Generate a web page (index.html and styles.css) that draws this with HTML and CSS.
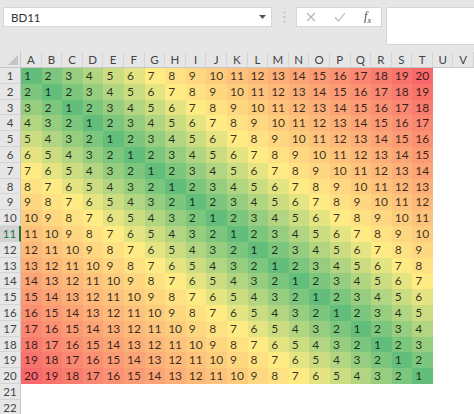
FILE: index.html
```html
<!DOCTYPE html>
<html lang="en">
<head>
    <meta charset="UTF-8">
    <meta name="viewport" content="width=device-width, initial-scale=1.0">
    <title>Distance grid</title>
    <link rel="stylesheet" href="styles.css">
</head>
<body>
    <div class="formula-bar">
        <div class="name-box">
            <span>BD11</span>
            <svg class="caret" width="7" height="4" viewBox="0 0 7 4"><path d="M0 0h7L3.5 4z" fill="#555"/></svg>
        </div>
        <div class="grip">
            <svg width="3" height="12" viewBox="0 0 3 12">
                <circle cx="1.5" cy="1.5" r="1" fill="#bdbdbd"/>
                <circle cx="1.5" cy="6" r="1" fill="#bdbdbd"/>
                <circle cx="1.5" cy="10.5" r="1" fill="#bdbdbd"/>
            </svg>
        </div>
        <div class="fx-box">
            <svg width="10" height="10" viewBox="0 0 10 10"><path d="M1 1l8 8M9 1l-8 8" stroke="#b3b3b3" stroke-width="1.1"/></svg>
            <svg width="12" height="10" viewBox="0 0 12 10"><path d="M1 5.5l3.5 3.5L11 1" stroke="#b3b3b3" stroke-width="1.1" fill="none"/></svg>
            <span class="fx">f<sub>x</sub></span>
        </div>
        <div class="formula-input"></div>
    </div>

    <div class="sheet" id="sheet"></div>

    <script>
        // Bảng màu kiểu Excel: xanh - vàng - đỏ
        const green = [99, 190, 123];
        const yellow = [255, 235, 132];
        const red = [248, 105, 107];
        const mid = 7;

        function mix(a, b, t) {
            return a.map((v, i) => Math.round(v + (b[i] - v) * t));
        }

        function colorFor(v) {
            let c;
            if (v <= mid) c = mix(green, yellow, (v - 1) / (mid - 1));
            else c = mix(yellow, red, (v - mid) / (20 - mid));
            return "rgb(" + c.join(",") + ")";
        }

        const sheet = document.getElementById("sheet");
        const letters = "ABCDEFGHIJKLMNOPQRSTUV";

        // Hàng tiêu đề cột
        const corner = document.createElement("div");
        corner.className = "corner";
        sheet.appendChild(corner);
        for (const l of letters) {
            const h = document.createElement("div");
            h.className = "col-head";
            h.innerText = l;
            sheet.appendChild(h);
        }

        // Các hàng dữ liệu
        for (let r = 1; r <= 22; r++) {
            const rh = document.createElement("div");
            rh.className = r === 11 ? "row-head active" : "row-head";
            rh.innerText = r;
            sheet.appendChild(rh);
            for (let c = 1; c <= 22; c++) {
                const cell = document.createElement("div");
                cell.className = "cell";
                if (r <= 20 && c <= 20) {
                    const v = Math.abs(r - c) + 1;
                    cell.innerText = v;
                    cell.style.background = colorFor(v);
                }
                sheet.appendChild(cell);
            }
        }
    </script>
</body>
</html>
```

FILE: styles.css
```css
body {
    margin: 0;
    width: 474px;
    height: 414px;
    overflow: hidden;
    background: #fff;
    font-family: Lato, "Liberation Sans", sans-serif;
}
.formula-bar {
    height: 52px;
    background: #e6e6e6;
    display: flex;
    align-items: flex-start;
    padding-top: 7px;
    box-sizing: border-box;
}
.name-box {
    margin-left: 3px;
    width: 269px;
    height: 20px;
    background: #fff;
    border: 1px solid #d6d6d6;
    box-sizing: border-box;
    display: flex;
    align-items: center;
    justify-content: space-between;
    padding: 0 5px 0 7px;
    font-size: 11.5px;
    color: #333;
}
.grip {
    width: 24px;
    height: 20px;
    display: flex;
    align-items: center;
    justify-content: center;
}
.fx-box {
    width: 86px;
    height: 20px;
    background: #fff;
    border: 1px solid #d6d6d6;
    box-sizing: border-box;
    display: flex;
    align-items: center;
    justify-content: space-between;
    padding: 0 10px 0 9px;
}
.fx {
    font-family: "Liberation Serif", serif;
    font-style: italic;
    font-size: 12px;
    color: #444;
}
.fx sub {
    font-size: 8px;
}
.formula-input {
    flex: 1;
    margin-left: 4px;
    height: 36px;
    background: #fff;
    border: 1px solid #d6d6d6;
    border-right: none;
}
.sheet {
    display: grid;
    grid-template-columns: 21px repeat(22, 20.6px);
    grid-template-rows: 16px;
    grid-auto-rows: 15.8px;
}
.corner {
    background: #e6e6e6;
    border-bottom: 1px solid #c8c8c8;
    border-right: 1px solid #c8c8c8;
    box-sizing: border-box;
    position: relative;
}
.corner::after {
    content: "";
    position: absolute;
    right: 2px;
    bottom: 2px;
    border-left: 10px solid transparent;
    border-bottom: 10px solid #c4c4c4;
}
.col-head {
    background: #e6e6e6;
    border-bottom: 1px solid #c8c8c8;
    border-right: 1px solid #d4d4d4;
    box-sizing: border-box;
    text-align: center;
    font-size: 11.5px;
    line-height: 16px;
    color: #444;
}
.row-head {
    background: #e6e6e6;
    border-right: 1px solid #c8c8c8;
    border-bottom: 1px solid #d4d4d4;
    box-sizing: border-box;
    text-align: center;
    font-size: 11.5px;
    line-height: 15px;
    color: #444;
}
.row-head.active {
    background: #d2d2d2;
    color: #217346;
    border-right: 2px solid #217346;
}
.cell {
    font-size: 12px;
    line-height: 15.8px;
    padding-left: 3px;
    color: rgba(0, 0, 0, 0.78);
    white-space: nowrap;
}
```
